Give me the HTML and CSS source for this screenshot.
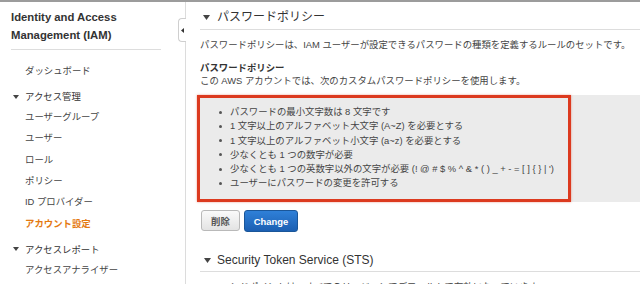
FILE: index.html
```html
<!DOCTYPE html>
<html lang="ja">
<head>
    <meta charset="UTF-8">
    <meta name="viewport" content="width=device-width, initial-scale=1.0">
    <title>Account settings</title>
    <link rel="stylesheet" href="styles.css">
</head>
<body>
    <div class="topbar"></div>
    <div class="layout">
        <aside class="sidebar">
            <h1 class="service-title">Identity and Access Management (IAM)</h1>
            <nav class="nav">
                <a class="nav-item" href="#">ダッシュボード</a>
                <div class="nav-group">
                    <svg class="caret" width="6" height="4" viewBox="0 0 6 4"><path d="M0 0H6L3 4Z"/></svg>
                    アクセス管理
                </div>
                <a class="nav-item" href="#">ユーザーグループ</a>
                <a class="nav-item" href="#">ユーザー</a>
                <a class="nav-item" href="#">ロール</a>
                <a class="nav-item" href="#">ポリシー</a>
                <a class="nav-item" href="#">ID プロバイダー</a>
                <a class="nav-item active" href="#">アカウント設定</a>
                <div class="nav-group">
                    <svg class="caret" width="6" height="4" viewBox="0 0 6 4"><path d="M0 0H6L3 4Z"/></svg>
                    アクセスレポート
                </div>
                <a class="nav-item" href="#">アクセスアナライザー</a>
            </nav>
            <div class="collapse-tab">
                <svg width="3" height="5" viewBox="0 0 3 5"><path d="M3 0V5L0 2.5Z"/></svg>
            </div>
        </aside>

        <main class="content">
            <h2 class="section-head">
                <svg class="caret" width="7" height="5" viewBox="0 0 7 5"><path d="M0 0H7L3.5 5Z"/></svg>
                パスワードポリシー
            </h2>
            <p class="intro">パスワードポリシーは、IAM ユーザーが設定できるパスワードの種類を定義するルールのセットです。</p>
            <p class="label">パスワードポリシー</p>
            <p class="desc">この AWS アカウントでは、次のカスタムパスワードポリシーを使用します。</p>

            <div class="policy-box">
                <ul class="rules">
                    <li>パスワードの最小文字数は 8 文字です</li>
                    <li>1 文字以上のアルファベット大文字 (A~Z) を必要とする</li>
                    <li>1 文字以上のアルファベット小文字 (a~z) を必要とする</li>
                    <li>少なくとも 1 つの数字が必要</li>
                    <li>少なくとも 1 つの英数字以外の文字が必要 (! @ # $ % ^ &amp; * ( ) _ + - = [ ] { } | ')</li>
                    <li>ユーザーにパスワードの変更を許可する</li>
                </ul>
            </div>

            <div class="actions">
                <button class="btn">削除</button>
                <button class="btn btn-primary">Change</button>
            </div>

            <h2 class="section-head sts">
                <svg class="caret" width="7" height="5" viewBox="0 0 7 5"><path d="M0 0H7L3.5 5Z"/></svg>
                Security Token Service (STS)
            </h2>
            <p class="intro">STS エンドポイントは、すべてのリージョンでデフォルトで有効になっています。</p>
        </main>
    </div>
</body>
</html>
```

FILE: styles.css
```css
body {
    font-family: "Liberation Sans", "Noto Sans CJK JP", sans-serif;
    background-color: #ffffff;
    color: #444;
    margin: 0;
    padding: 0;
    overflow: hidden;
}
.topbar {
    height: 2px;
    background-color: #9c9c9c;
}
.layout {
    display: flex;
    height: 282px;
}
.sidebar {
    position: relative;
    width: 175px;
    flex-shrink: 0;
    padding: 6px 0 0 10px;
    border-right: 1px solid #dcdcdc;
}
.service-title {
    margin: 0 24px 5px 1px;
    padding-bottom: 5px;
    font-size: 11.3px;
    line-height: 18px;
    font-weight: bold;
    color: #333;
    border-bottom: 1px solid #dddddd;
}
.nav {
    display: flex;
    flex-direction: column;
    padding-top: 5px;
}
.nav-item {
    display: block;
    padding-left: 15px;
    font-size: 9.4px;
    line-height: 21.4px;
    color: #444;
    text-decoration: none;
}
.nav-item.active {
    color: #e47911;
    font-weight: bold;
}
.nav-group {
    display: flex;
    align-items: center;
    margin: 4.5px 0 -1.5px;
    padding-left: 3px;
    font-size: 9.4px;
    line-height: 21.4px;
    color: #333;
}
.nav-group .caret {
    fill: #444;
    margin-right: 6px;
}
.nav-group + .nav-item {
    margin-top: 0;
}
.collapse-tab {
    position: absolute;
    top: 16px;
    right: -1px;
    width: 8px;
    height: 24px;
    background-color: #fff;
    border: 1px solid #cfcfcf;
    border-right: none;
    border-radius: 4px 0 0 4px;
    display: flex;
    align-items: center;
    justify-content: flex-end;
    padding-right: 2px;
    box-sizing: border-box;
}
.collapse-tab svg {
    fill: #333;
}
.content {
    flex: 1;
    min-width: 0;
    padding-left: 14px;
}
.section-head {
    display: flex;
    align-items: center;
    margin: 6px 0 0;
    padding: 0 0 3px 3px;
    font-size: 12px;
    line-height: 18px;
    font-weight: normal;
    color: #333;
    border-bottom: 1px solid #dddddd;
}
.section-head .caret {
    fill: #444;
    margin-right: 7px;
}
.section-head.sts {
    margin-top: 19px;
    padding-left: 4px;
    padding-bottom: 2px;
}
.section-head.sts .caret {
    margin-right: 6px;
}
.intro {
    margin: 8px 0 0;
    font-size: 9.4px;
    line-height: 14px;
    white-space: nowrap;
}
.label {
    margin: 8.5px 0 0;
    font-size: 9.4px;
    line-height: 13.6px;
    font-weight: bold;
    color: #333;
}
.desc {
    margin: 0;
    font-size: 9.4px;
    line-height: 13.6px;
}
.policy-box {
    margin: 7.5px 0 0 -3px;
    background-color: #ebebeb;
}
.rules {
    width: 368px;
    margin: 0;
    padding: 7px 0 8.6px;
    list-style: none;
    border: 3px solid #dc3a1f;
    box-shadow: 0 0 2px rgba(220, 58, 31, 0.5);
}
.rules li {
    display: flex;
    align-items: center;
    font-size: 9.4px;
    line-height: 14.2px;
    color: #444;
    white-space: nowrap;
}
.rules li::before {
    content: "";
    width: 3px;
    height: 3px;
    border-radius: 50%;
    background-color: #555;
    margin: 0 8px 0 19px;
    flex-shrink: 0;
}
.actions {
    display: flex;
    gap: 4px;
    margin-top: 8px;
    padding-left: 1px;
}
.btn {
    height: 21px;
    padding: 0 9px;
    font-family: inherit;
    font-size: 9.4px;
    font-weight: bold;
    color: #555;
    background: linear-gradient(#fafafa, #e3e3e3);
    border: 1px solid #b9b9b9;
    border-radius: 3px;
    cursor: pointer;
}
.btn-primary {
    height: 22px;
    padding: 0 9px;
    color: #fff;
    background: linear-gradient(#2f80d8, #1b5fb2);
    border-color: #1a5699;
}
```
